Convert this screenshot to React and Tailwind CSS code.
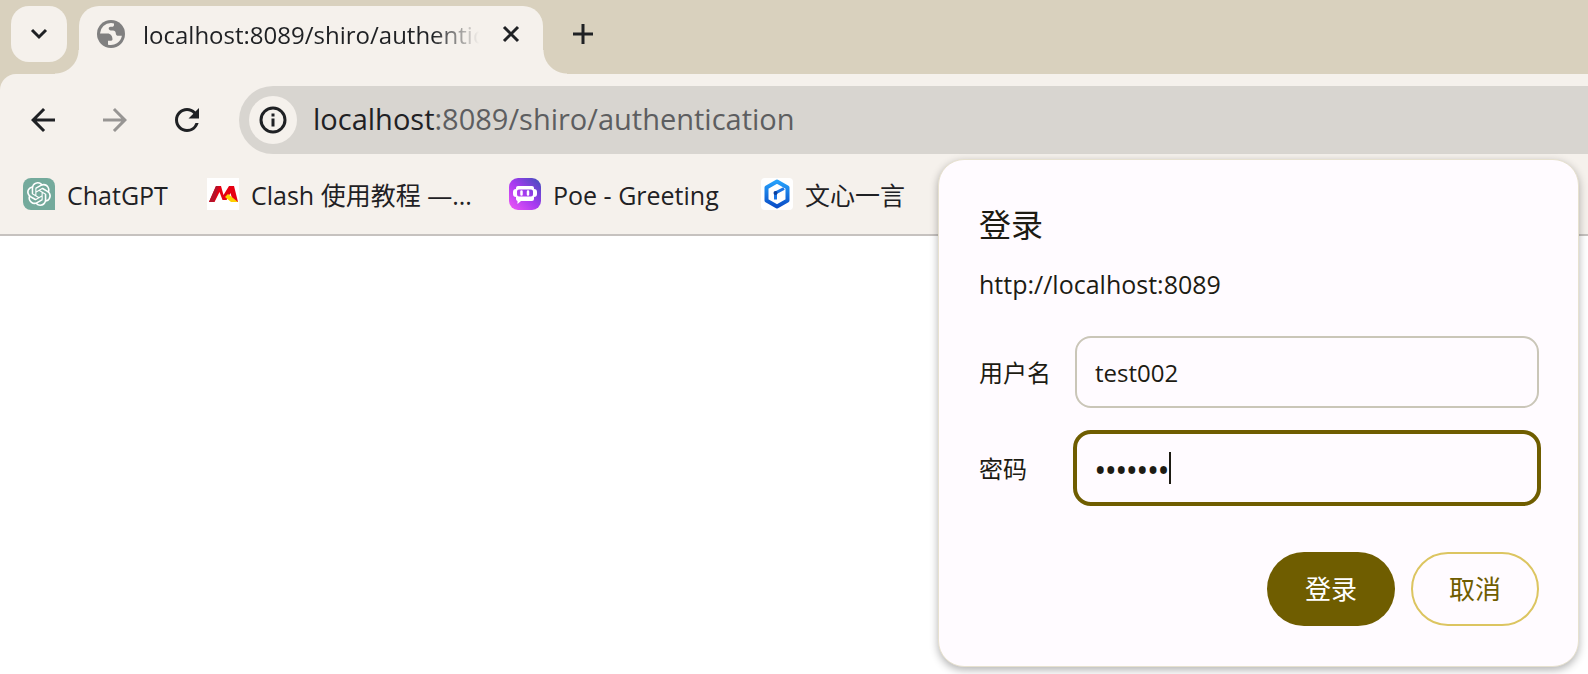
import React, { useState } from 'react';
import { MdArrowBack, MdArrowForward, MdRefresh } from 'react-icons/md';
import { SiOpenai } from 'react-icons/si';

const ChevronIcon = () => (
    <svg viewBox="0 0 18 12" className="w-[18px] h-3" fill="none" stroke="currentColor" strokeWidth="3">
        <path d="M2 2l7 7 7-7" />
    </svg>
);

const CloseIcon = () => (
    <svg viewBox="0 0 18 18" className="size-[18px]" fill="none" stroke="currentColor" strokeWidth="3">
        <path d="M2 2l14 14M16 2L2 16" />
    </svg>
);

const PlusIcon = () => (
    <svg viewBox="0 0 20 20" className="size-5" fill="none" stroke="currentColor" strokeWidth="3">
        <path d="M10 0v20M0 10h20" />
    </svg>
);

const InfoIcon = () => (
    <svg viewBox="0 0 28 28" className="size-7" fill="none" stroke="currentColor" strokeWidth="3">
        <circle cx="14" cy="14" r="12" />
        <path d="M14 12.500v8M14 7.500v3" />
    </svg>
);

const GlobeIcon = () => (
    <svg viewBox="0 0 28 28" className="size-7 shrink-0">
        <circle cx="14" cy="14" r="14" fill="#808080" />
        <path
            d="M3 13.500A11.200 11.200 0 0 1 14 2.900c1.200 0 2.200.2 3 .5v1.600c0 1-.8 1.800-1.800 1.800H13.500c-1 0-1.800.8-1.800 1.800 0 1.200 1 1.800 2 1.800h2.300c1.600 0 2.800 1.300 2.800 3s1.200 2.400 2.600 2.400h3.500A11.200 11.200 0 0 1 11 24.700v-4h3.200c.8 0 1.300-.6 1.300-1.400 0-3.200-1.800-5.800-5-5.800z"
            fill="#f5f1ec"
        />
    </svg>
);

const ChatGptIcon = () => (
    <span className="flex size-8 items-center justify-center rounded-lg rounded-br-none bg-[#74aa9c] text-white">
        <SiOpenai className="size-6" />
    </span>
);

const ClashIcon = () => (
    <svg viewBox="0 0 32 32" className="size-8">
        <rect width="32" height="32" fill="#fff" />
        <path d="M2 24L9 8h5l2.500 9L22 8h5l4 16h-5l-2.500-9-4 7h-4l-3-8-5 10z" fill="#e60012" />
        <path d="M2 24L9 8h3L7 24z" fill="#b5122a" />
        <path d="M18 19l3-3 10 8h-7z" fill="#fdd000" />
    </svg>
);

const PoeIcon = () => (
    <svg viewBox="0 0 32 32" className="size-8">
        <defs>
            <linearGradient id="poe" x1="0" y1="1" x2="1" y2="0">
                <stop offset="0" stopColor="#f157f6" />
                <stop offset="0.5" stopColor="#a53af0" />
                <stop offset="1" stopColor="#3d4fb8" />
            </linearGradient>
        </defs>
        <rect width="32" height="32" rx="9" fill="url(#poe)" />
        <path
            fillRule="evenodd"
            d="M9 8h14a2 2 0 0 1 2 2v1a3 3 0 0 1 3 3v2a3 3 0 0 1-3 3v2a2 2 0 0 1-2 2H12l-3.500 3v-3a2 2 0 0 1-1.500-2v-2a3 3 0 0 1-3-3v-2a3 3 0 0 1 3-3v-1a2 2 0 0 1 2-2zM10 11.500a2 2 0 0 0-2 2v3a2 2 0 0 0 2 2h12a2 2 0 0 0 2-2v-3a2 2 0 0 0-2-2z"
            fill="#fff"
        />
        <path d="M12.500 13.500v3M19 13.500v3" stroke="#fff" strokeWidth="2.500" strokeLinecap="round" />
    </svg>
);

const WenxinIcon = () => (
    <svg viewBox="0 0 32 32" className="size-8">
        <defs>
            <linearGradient id="wenxin" x1="0" y1="0" x2="0" y2="1">
                <stop offset="0" stopColor="#25a0fb" />
                <stop offset="1" stopColor="#0b4fc8" />
            </linearGradient>
        </defs>
        <rect width="32" height="32" rx="4" fill="#fff" />
        <path d="M16 3.500L26.500 9.500v13L16 28.500 5.500 22.500v-13z" fill="none" stroke="url(#wenxin)" strokeWidth="4" strokeLinejoin="round" />
        <path d="M14.500 21.500V15L23 10.500" fill="none" stroke="#1b74e4" strokeWidth="3" />
        <circle cx="14.500" cy="15" r="2" fill="#0a3f9e" />
    </svg>
);

const bookmarks = [
    { label: 'ChatGPT', Icon: ChatGptIcon, width: 'w-[100px]' },
    { label: 'Clash 使用教程 —...', Icon: ClashIcon, width: 'w-[218px]' },
    { label: 'Poe - Greeting', Icon: PoeIcon, width: 'w-[168px]' },
    { label: '文心一言', Icon: WenxinIcon, width: 'w-[100px]' },
];

const TabStrip = () => (
    <div className="flex h-[74px] items-end">
        <button aria-label="Search tabs" className="mb-3 ml-[11px] flex size-14 items-center justify-center rounded-[18px] bg-[#f5f1ec]">
            <ChevronIcon />
        </button>
        <div className="relative ml-3 flex h-[68px] w-[464px] items-center rounded-t-[20px] bg-[#f5f1ec] pb-3 pl-[18px] pr-[23px]">
            <span className="absolute bottom-0 right-full size-6 bg-[radial-gradient(circle_at_0_0,transparent_23px,#f5f1ec_24px)]" />
            <span className="absolute bottom-0 left-full size-6 bg-[radial-gradient(circle_at_100%_0,transparent_23px,#f5f1ec_24px)]" />
            <GlobeIcon />
            <span className="ml-[18px] w-[336px] overflow-hidden whitespace-nowrap pt-0.5 text-[24px] leading-8 [mask-image:linear-gradient(to_right,black_290px,transparent_336px)]">
                localhost:8089/shiro/authentication
            </span>
            <button aria-label="Close tab" className="ml-auto">
                <CloseIcon />
            </button>
        </div>
        <button aria-label="New tab" className="mb-[30px] ml-[30px]">
            <PlusIcon />
        </button>
    </div>
);

const Toolbar = () => (
    <div className="flex items-center rounded-tl-2xl bg-[#f5f1ec] pt-3">
        <div className="flex w-[239px] items-center gap-9 pl-[25px]">
            <button aria-label="Back"><MdArrowBack className="size-9" /></button>
            <button aria-label="Forward" className="text-[#979593]"><MdArrowForward className="size-9" /></button>
            <button aria-label="Reload"><MdRefresh className="size-9" /></button>
        </div>
        <div className="flex h-[68px] flex-1 items-center rounded-l-full bg-[#d8d5d0] pl-[10px]">
            <button aria-label="Site information" className="flex size-12 items-center justify-center rounded-full bg-[#f5f1ec]">
                <InfoIcon />
            </button>
            <p className="ml-4 pb-0.5 text-[29px] leading-10 text-[#5d5e60]">
                <span className="text-[#1f2124]">localhost</span>:8089/shiro/authentication
            </p>
        </div>
    </div>
);

const BookmarksBar = () => (
    <nav className="flex h-[82px] items-center gap-10 border-b-2 border-[#c6c2bf] bg-[#f5f1ec] pl-[23px]">
        {bookmarks.map(({ label, Icon, width }) => (
            <a key={label} href="#" className="flex items-center gap-3">
                <Icon />
                <span className={`whitespace-nowrap pt-0.5 text-[25px] leading-8 ${width}`}>{label}</span>
            </a>
        ))}
    </nav>
);

const LoginDialog = () => {
    const [username, setUsername] = useState('test002');
    const [password, setPassword] = useState('test002');

    return (
        <form
            role="dialog"
            aria-labelledby="login-title"
            onSubmit={(e) => e.preventDefault()}
            className="absolute right-[9px] top-[159px] w-[641px] rounded-[26px] border border-[#e7e1cf] bg-[#fffbff] pb-10 pl-10 pr-[39px] pt-[43px] text-[#1d1b13] shadow-[0_3px_8px_rgba(0,0,0,0.3)]"
        >
            <h1 id="login-title" className="text-[32px] leading-[44px]">登录</h1>
            <p className="mt-[21px] text-[25px] leading-8">http://localhost:8089</p>

            <div className="mt-9 flex items-center">
                <label htmlFor="username" className="w-24 pt-0.5 text-[24px] leading-8">用户名</label>
                <input
                    id="username"
                    value={username}
                    onChange={(e) => setUsername(e.target.value)}
                    className="h-[72px] min-w-0 flex-1 rounded-2xl border-2 border-[#cac6b8] px-[18px] text-[24px] outline-none"
                />
            </div>

            <div className="mt-[22px] flex items-center">
                <label htmlFor="password" className="w-24 pt-0.5 text-[24px] leading-8">密码</label>
                <div className="relative -mx-0.5 min-w-0 flex-1">
                    <input
                        id="password"
                        type="password"
                        value={password}
                        onChange={(e) => setPassword(e.target.value)}
                        className="block h-[76px] w-full rounded-[18px] border-4 border-[#6f5d00] px-[18px] pt-1 text-[28px] font-semibold caret-transparent outline-none"
                    />
                    <span className="absolute left-24 top-[22px] h-8 w-0.5 bg-[#1d1b13]" />
                </div>
            </div>

            <div className="mt-[46px] flex justify-end gap-4 text-[26px]">
                <button type="submit" className="h-[74px] w-32 rounded-full bg-[#6f5d00] text-white">登录</button>
                <button type="button" className="h-[74px] w-32 rounded-full border-2 border-[#dcc561] text-[#6f5d00]">取消</button>
            </div>
        </form>
    );
};

const App = () => (
    <div className="relative flex min-h-screen flex-col overflow-hidden bg-white font-['Open_Sans','Noto_Sans_CJK_SC',sans-serif] text-[#1f2124]">
        <header className="bg-[#d9d1be]">
            <TabStrip />
            <Toolbar />
            <BookmarksBar />
        </header>
        <LoginDialog />
    </div>
);

export default App;
